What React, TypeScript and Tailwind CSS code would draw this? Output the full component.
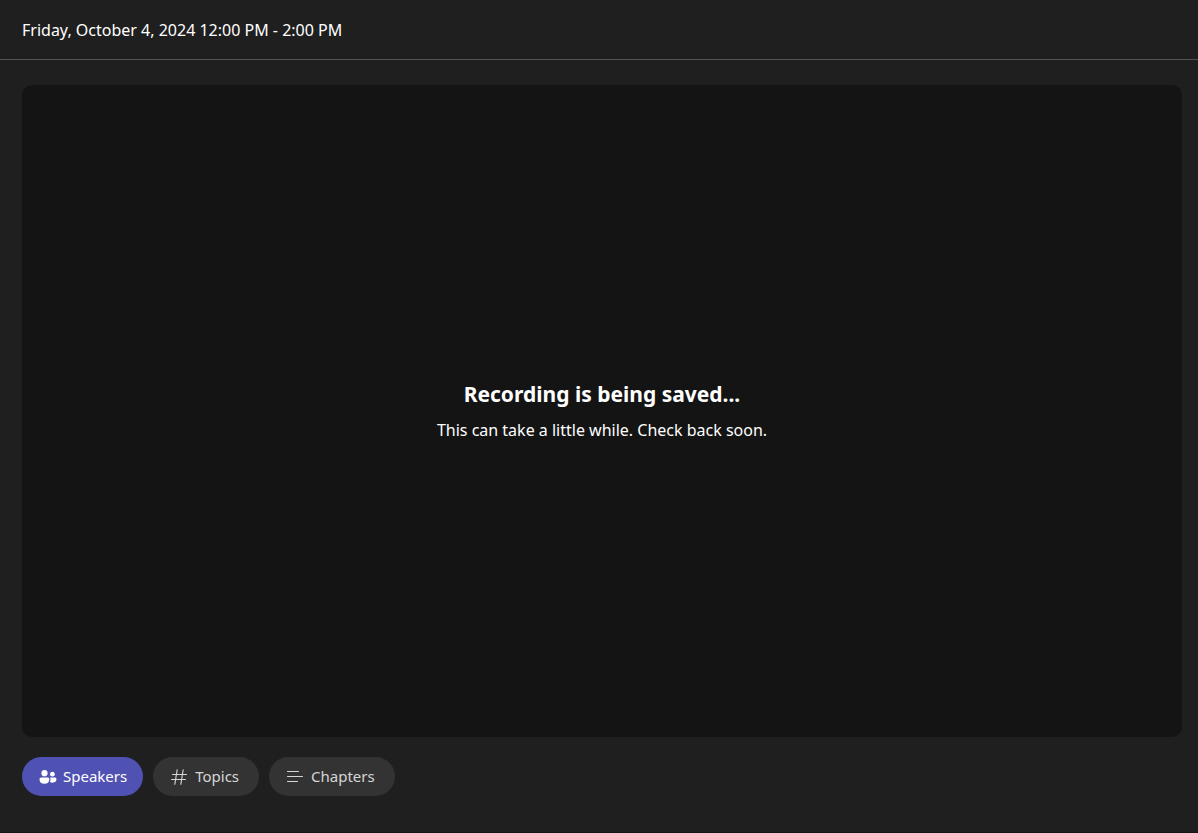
import React, { useState } from "react";
import clsx from "clsx";

interface IconProps {
  className?: string;
}

const PeopleIcon = ({ className }: IconProps) => (
  <svg viewBox="0 0 20 20" fill="currentColor" className={className} aria-hidden="true">
    <circle cx="6.5" cy="7.2" r="3.1" />
    <circle cx="14.4" cy="8.2" r="2.4" />
    <path d="M3.2 11.5h6.4c1 0 1.7.7 1.7 1.7 0 2.9-1.9 4.6-4.9 4.6s-4.9-1.7-4.9-4.6c0-1 .7-1.7 1.7-1.7Z" />
    <path d="M11.9 11.5h4.85c1 0 1.75.7 1.75 1.6 0 2.3-1.5 3.6-3.9 3.6-1.1 0-2-.2-2.7-.6.4-.8.6-1.8.6-2.9 0-.65-.2-1.2-.6-1.7Z" />
  </svg>
);

const HashIcon = ({ className }: IconProps) => (
  <svg
    viewBox="0 0 20 20"
    fill="none"
    stroke="currentColor"
    strokeWidth="1.1"
    strokeLinecap="round"
    className={className}
    aria-hidden="true"
  >
    <path d="M8.2 3.7 5.8 18.3M14.2 3.7 11.8 18.3M3.5 8.5h14M2.5 13.5h14" />
  </svg>
);

const ChaptersIcon = ({ className }: IconProps) => (
  <svg
    viewBox="0 0 20 20"
    fill="none"
    stroke="currentColor"
    strokeLinecap="round"
    className={className}
    aria-hidden="true"
  >
    <path d="M2.5 5.5h11M2.5 10.5h15M2.5 15.5h10" />
  </svg>
);

const tabs = [
  { id: "speakers", label: "Speakers", Icon: PeopleIcon },
  { id: "topics", label: "Topics", Icon: HashIcon },
  { id: "chapters", label: "Chapters", Icon: ChaptersIcon },
];

function App() {
  const [active, setActive] = useState("speakers");

  return (
    <div className="flex min-h-screen flex-col border-b border-[#141414] bg-[#1f1f1f] font-['Segoe_UI','Noto_Sans',sans-serif] text-white">
      <header className="border-b border-[#525252] pt-[18px] pr-4 pb-[17px] pl-[22px]">
        <h1 className="text-base leading-6">
          Friday, October 4, 2024 12:00 PM - 2:00 PM
        </h1>
      </header>

      <main className="pt-[25px] pr-4 pb-8 pl-[22px]">
        <section className="flex aspect-[89/50] w-full flex-col items-center justify-center gap-2 rounded-[10px] bg-[#141414] pt-[2px] text-center">
          <h2 className="text-[21px] leading-7 font-bold">Recording is being saved...</h2>
          <p className="text-base leading-7">
            This can take a little while. Check back soon.
          </p>
        </section>

        <div className="mt-5 flex flex-wrap gap-[10px]">
          {tabs.map(({ id, label, Icon }) => (
            <button
              key={id}
              type="button"
              aria-pressed={active === id}
              onClick={() => setActive(id)}
              className={clsx(
                "flex h-[39px] items-center rounded-full pl-4 text-[15px]",
                active === id
                  ? "gap-[5px] bg-[#4f52b2] pr-4 text-white"
                  : "gap-[6px] bg-[#333333] pr-5 text-[#d6d6d6]"
              )}
            >
              <Icon className="size-5" />
              {label}
            </button>
          ))}
        </div>
      </main>
    </div>
  );
}

export default App;
